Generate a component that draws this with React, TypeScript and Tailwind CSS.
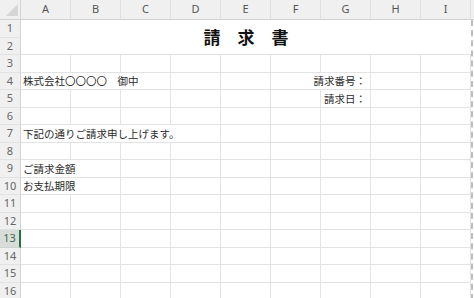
import React from "react";

const cols = ["A", "B", "C", "D", "E", "F", "G", "H", "I"];

type Cell = { text?: string; right?: boolean };
type RowDef = { n: number; cells?: Record<number, Cell>; hide?: number[] };

const rows: RowDef[] = [
  { n: 3 },
  {
    n: 4,
    cells: { 0: { text: "株式会社〇〇〇〇　御中" }, 6: { text: "請求番号：", right: true } },
    hide: [0, 1, 5],
  },
  { n: 5, cells: { 6: { text: "請求日：", right: true } } },
  { n: 6 },
  { n: 7, cells: { 0: { text: "下記の通りご請求申し上げます。" } }, hide: [0, 1, 2] },
  { n: 8 },
  { n: 9, cells: { 0: { text: "ご請求金額" } }, hide: [0] },
  { n: 10, cells: { 0: { text: "お支払期限" } }, hide: [0] },
  { n: 11 },
  { n: 12 },
  { n: 13 },
  { n: 14 },
  { n: 15 },
  { n: 16 },
];

const cjk = "font-['Noto_Sans_CJK_JP','Noto_Sans',sans-serif]";

const RowHead = ({ n, h, active }: { n: number; h: string; active?: boolean }) => (
  <div
    className={`${h} w-[21px] shrink-0 flex items-center justify-center text-[11px] font-['Noto_Sans',sans-serif] border-b ${
      active
        ? "bg-[#d9ddda] text-[#3d6b52] border-[#cfd3d0] border-r-2 border-r-[#217346]"
        : "bg-[#f0f0f0] text-[#666] border-[#e2e2e2] border-r border-r-[#d4d4d4]"
    }`}
  >
    {n}
  </div>
);

const SheetRow = ({ def, h }: { def: RowDef; h: string }) => (
  <div className="flex">
    <RowHead n={def.n} h={h} active={def.n === 13} />
    {cols.map((c, i) => {
      const cell = def.cells?.[i];
      const hidden = def.hide?.includes(i);
      return (
        <div
          key={c}
          className={`${h} w-[50px] shrink-0 flex items-center border-b border-[#e3e3e3] ${
            hidden ? "" : "border-r"
          } ${cell?.right ? "justify-end pr-[4px]" : "pl-[2px]"}`}
        >
          {cell?.text && (
            <span className={`whitespace-nowrap text-[10.5px] text-[#2b2b2b] ${cjk}`}>{cell.text}</span>
          )}
        </div>
      );
    })}
  </div>
);

export default function App() {
  return (
    <div className="w-[474px] h-[298px] overflow-hidden bg-white">
      {/* column headers */}
      <div className="flex h-[20px] bg-[#f0f0f0] border-b border-[#d2d2d2]">
        <div className="w-[21px] shrink-0 border-r border-[#d4d4d4] flex items-end justify-end">
          <svg width="14" height="14" viewBox="0 0 14 14" className="mb-[2px] mr-[1px]">
            <polygon points="1,13 13,13 13,1" fill="#d6d6d6" />
          </svg>
        </div>
        {cols.map((c) => (
          <div
            key={c}
            className="w-[50px] shrink-0 flex items-center justify-center border-r border-[#e0e0e0] text-[11px] text-[#555] font-['Noto_Sans',sans-serif]"
          >
            {c}
          </div>
        ))}
      </div>

      <div className="flex">
        <div className="w-[471px] shrink-0">
          {/* title, merged A1:I2 */}
          <div className="flex">
            <div className="flex flex-col">
              <RowHead n={1} h="h-[18px]" />
              <RowHead n={2} h="h-[17px]" />
            </div>
            <div className="w-[450px] h-[35px] flex items-center justify-center border-b border-[#e3e3e3]">
              <span className={`text-[17px] font-bold text-[#111] ${cjk}`}>請　求　書</span>
            </div>
          </div>
          {rows.map((r, i) => (
            <SheetRow key={r.n} def={r} h={i % 2 === 0 ? "h-[18px]" : "h-[17px]"} />
          ))}
        </div>
        <div className="w-[3px] h-[280px] border-l-2 border-dashed border-[#bdbdbd]" />
      </div>
    </div>
  );
}
